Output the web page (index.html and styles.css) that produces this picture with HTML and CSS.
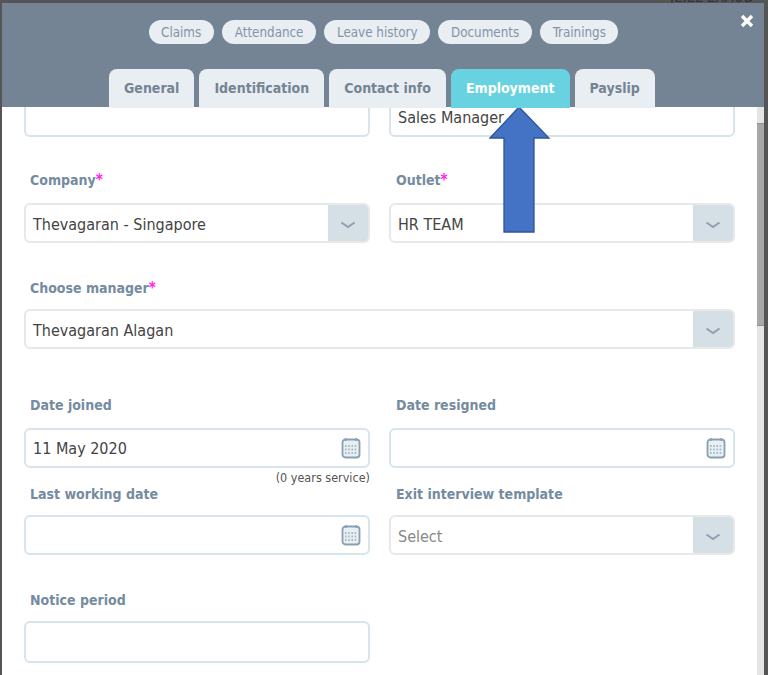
FILE: index.html
```html
<!DOCTYPE html>
<html lang="en">
<head>
  <meta charset="UTF-8">
  <title>Employment</title>
  <link rel="stylesheet" href="styles.css">
</head>
<body>
  <div class="backdrop">
    <div class="backdrop__title">JEIEL EXAUD</div>
    <div class="modal">
      <div class="modal__head">
        <svg class="close" width="14" height="14" viewBox="0 0 14 14"><path d="M2 2 12 12M12 2 2 12" stroke="#fff" stroke-width="3.400"/></svg>
        <div class="pills">
          <span class="pill">Claims</span>
          <span class="pill">Attendance</span>
          <span class="pill">Leave history</span>
          <span class="pill">Documents</span>
          <span class="pill">Trainings</span>
        </div>
        <div class="tabs">
          <div class="tab">General</div>
          <div class="tab">Identification</div>
          <div class="tab">Contact info</div>
          <div class="tab tab--active">Employment</div>
          <div class="tab">Payslip</div>
        </div>
      </div>
      <div class="modal__main">
        <div class="modal__body">
          <div class="row row--top">
            <div class="field"><div class="input"></div></div>
            <div class="field"><div class="input">Sales Manager</div></div>
          </div>
          <div class="row row--company">
            <div class="field">
              <div class="label">Company<span class="req">*</span></div>
              <div class="select"><span class="select__text">Thevagaran - Singapore</span><span class="select__btn"><svg width="16" height="8" viewBox="0 0 16 8"><path d="M1.5 1.5 8 6l6.500-4.500" fill="none" stroke="#8fa1b1" stroke-width="2"/></svg></span></div>
            </div>
            <div class="field">
              <div class="label">Outlet<span class="req">*</span></div>
              <div class="select"><span class="select__text">HR TEAM</span><span class="select__btn"><svg width="16" height="8" viewBox="0 0 16 8"><path d="M1.5 1.5 8 6l6.500-4.500" fill="none" stroke="#8fa1b1" stroke-width="2"/></svg></span></div>
            </div>
          </div>
          <div class="row row--manager">
            <div class="field">
              <div class="label">Choose manager<span class="req">*</span></div>
              <div class="select"><span class="select__text">Thevagaran Alagan</span><span class="select__btn"><svg width="16" height="8" viewBox="0 0 16 8"><path d="M1.5 1.5 8 6l6.500-4.500" fill="none" stroke="#8fa1b1" stroke-width="2"/></svg></span></div>
            </div>
          </div>
          <div class="row row--dates">
            <div class="field">
              <div class="label">Date joined</div>
              <div class="input input--date">11 May 2020
                <svg class="cal" width="20" height="22" viewBox="0 0 20 22"><rect x="1.500" y="2.500" width="17" height="18" rx="3" fill="#e8eff3" stroke="#8aa0b2" stroke-width="1.800"/><path d="M5 1v3M15 1v3" stroke="#8aa0b2" stroke-width="1.500"/><path d="M4 9h1.600M7.200 9h1.600M10.400 9h1.600M13.600 9h1.600M4 12.500h1.600M7.200 12.500h1.600M10.400 12.500h1.600M13.600 12.500h1.600M4 16h1.600M7.200 16h1.600M10.400 16h1.600M13.600 16h1.600" stroke="#a9bac7" stroke-width="2"/></svg>
              </div>
              <div class="service">(0 years service)</div>
            </div>
            <div class="field">
              <div class="label">Date resigned</div>
              <div class="input input--date">
                <svg class="cal" width="20" height="22" viewBox="0 0 20 22"><rect x="1.500" y="2.500" width="17" height="18" rx="3" fill="#e8eff3" stroke="#8aa0b2" stroke-width="1.800"/><path d="M5 1v3M15 1v3" stroke="#8aa0b2" stroke-width="1.500"/><path d="M4 9h1.600M7.200 9h1.600M10.400 9h1.600M13.600 9h1.600M4 12.500h1.600M7.200 12.500h1.600M10.400 12.500h1.600M13.600 12.500h1.600M4 16h1.600M7.200 16h1.600M10.400 16h1.600M13.600 16h1.600" stroke="#a9bac7" stroke-width="2"/></svg>
              </div>
            </div>
          </div>
          <div class="row row--last">
            <div class="field">
              <div class="label">Last working date</div>
              <div class="input input--date">
                <svg class="cal" width="20" height="22" viewBox="0 0 20 22"><rect x="1.500" y="2.500" width="17" height="18" rx="3" fill="#e8eff3" stroke="#8aa0b2" stroke-width="1.800"/><path d="M5 1v3M15 1v3" stroke="#8aa0b2" stroke-width="1.500"/><path d="M4 9h1.600M7.200 9h1.600M10.400 9h1.600M13.600 9h1.600M4 12.500h1.600M7.200 12.500h1.600M10.400 12.500h1.600M13.600 12.500h1.600M4 16h1.600M7.200 16h1.600M10.400 16h1.600M13.600 16h1.600" stroke="#a9bac7" stroke-width="2"/></svg>
              </div>
            </div>
            <div class="field">
              <div class="label">Exit interview template</div>
              <div class="select"><span class="select__text select__text--hint">Select</span><span class="select__btn"><svg width="16" height="8" viewBox="0 0 16 8"><path d="M1.5 1.5 8 6l6.500-4.500" fill="none" stroke="#8fa1b1" stroke-width="2"/></svg></span></div>
            </div>
          </div>
          <div class="row row--notice">
            <div class="field">
              <div class="label">Notice period</div>
              <div class="input input--notice"></div>
            </div>
            <div class="field"></div>
          </div>
        </div>
        <div class="scrollbar"><div class="scrollbar__thumb"></div></div>
      </div>
    </div>
  </div>
  <!-- arrow drawn on top of the screenshot -->
  <svg class="arrow" width="62" height="128" viewBox="0 0 62 128"><path d="M30 1 60 32H45V126H15V32H1Z" fill="#4472c4" stroke="#2f5597" stroke-width="1.300"/></svg>
</body>
</html>
```

FILE: styles.css
```css
* {
  box-sizing: border-box;
  font-family: "DejaVu Sans Condensed", "DejaVu Sans", sans-serif;
}
html, body {
  margin: 0;
  height: 100%;
  overflow: hidden;
}
body {
  position: relative;
  background: #555;
}
.backdrop {
  height: 675px;
  padding: 3px 0 0 2px;
}
.backdrop__title {
  position: absolute;
  top: -10px;
  left: 670px;
  color: #333;
  font-size: 15px;
  line-height: 14px;
}
.modal {
  position: relative;
  width: 761.5px;
  height: 672px;
  background: #fff;
  overflow: hidden;
}
.modal__head {
  position: relative;
  z-index: 1;
  height: 104px;
  padding-top: 17px;
  background: #748494;
}
.close {
  position: absolute;
  top: 11px;
  right: 10px;
}
.pills {
  display: flex;
  justify-content: center;
  gap: 8.500px;
  width: 763px;
}
.pill {
  height: 23.500px;
  padding: 0 12.500px;
  border-radius: 12px;
  background: #e8eef2;
  color: #8395a6;
  font-size: 13.300px;
  line-height: 26px;
}
.tabs {
  display: flex;
  gap: 5px;
  margin-top: 25px;
  padding-left: 107px;
}
.tab {
  height: 39px;
  padding: 0 15px;
  border-radius: 8px 8px 0 0;
  background: #e8eef2;
  color: #748494;
  font-size: 14px;
  font-weight: 700;
  line-height: 39px;
}
.tab--active {
  background: #69d2e1;
  color: #fff;
}
.modal__main {
  display: flex;
  height: 568px;
}
.modal__body {
  width: 755px;
  padding: 0 22px;
}
.row {
  display: flex;
  gap: 19px;
}
.field {
  position: relative;
  flex: 1;
}
.label {
  height: 16px;
  margin: 0 0 13px 6px;
  color: #748ba0;
  font-size: 14px;
  font-weight: 700;
  line-height: 17px;
}
.field + .field .label {
  margin-left: 7px;
}
.req {
  color: #ff22ee;
  font-size: 15px;
}
.input, .select {
  display: flex;
  align-items: center;
  height: 40px;
  border: 2px solid #d6e4ec;
  border-radius: 6px;
  background: #fff;
  color: #444;
  font-size: 16px;
}
.input {
  padding-left: 7px;
}
.input--date {
  justify-content: space-between;
  padding-right: 7px;
}
.input--notice {
  height: 42px;
}
.select {
  border-color: #e8e8e8;
  overflow: hidden;
}
.select__text {
  flex: 1;
  padding: 3px 0 0 7px;
}
.select__text--hint {
  color: #888;
}
.select__btn {
  display: flex;
  justify-content: center;
  align-items: center;
  width: 40px;
  height: 100%;
  padding-top: 3px;
  background: #d5dfe6;
}
.cal {
  margin-left: auto;
}
.service {
  position: absolute;
  right: 0;
  bottom: -18px;
  color: #555;
  font-size: 12.500px;
  line-height: 16px;
}
.row--top { margin-top: -10px; }
.row--company { margin-top: 35px; }
.row--company .label, .row--dates .label { margin-bottom: 15px; }
.row--manager { margin-top: 37px; }
.row--dates { margin-top: 48px; }
.row--last { margin-top: 18px; }
.row--notice { margin-top: 37px; }
.scrollbar {
  width: 6.500px;
  padding-top: 16px;
  background: #e4e4e4;
}
.scrollbar__thumb {
  height: 203px;
  border-top: 1px solid #7f96a9;
  border-bottom: 1px solid #7f96a9;
  background: #a8a8a8;
}
.arrow {
  position: absolute;
  left: 489px;
  top: 106px;
}
```
